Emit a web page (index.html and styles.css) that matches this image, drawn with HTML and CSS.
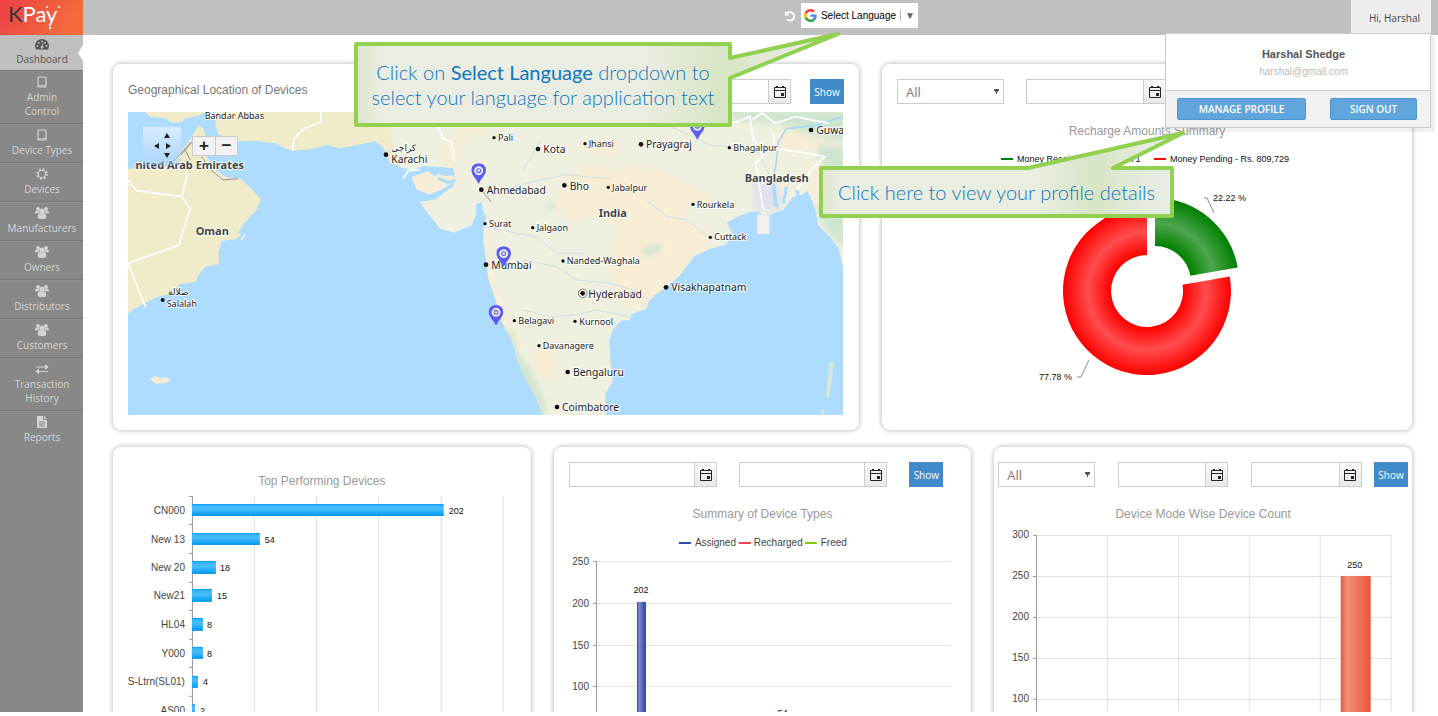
FILE: index.html
```
<!DOCTYPE html>
<html lang="en">
<head>
<meta charset="utf-8">
<title>KPay Dashboard</title>
<link rel="stylesheet" href="styles.css">
</head>
<body>
<svg class="defs" width="0" height="0" aria-hidden="true">
  <defs>
    <symbol id="i-gauge" viewBox="0 0 14 12"><path fill="currentColor" fill-rule="evenodd" d="M7 1a7 7 0 0 0-6 10.5h12A7 7 0 0 0 7 1zM2.5 7.1a.9.9 0 1 1 0 1.8.9.9 0 0 1 0-1.8zM3.9 4a.9.9 0 1 1 0 1.8.9.9 0 0 1 0-1.8zM7 2.5a.9.9 0 1 1 0 1.8.9.9 0 0 1 0-1.8zM10.1 4a.9.9 0 1 1 0 1.8.9.9 0 0 1 0-1.8zM11.5 7.1a.9.9 0 1 1 0 1.8.9.9 0 0 1 0-1.8zM7.8 5l.7.2-.7 2.7A1.4 1.4 0 1 1 7 7.7z"/></symbol>
    <symbol id="i-tablet" viewBox="0 0 14 12"><rect x="3" y="1" width="8" height="10" rx="1" fill="none" stroke="currentColor" stroke-width="1.2"/><path stroke="currentColor" d="M3 9.8h8"/></symbol>
    <symbol id="i-sun" viewBox="0 0 14 12"><circle cx="7" cy="6" r="3.7" fill="none" stroke="currentColor" stroke-width="1.1"/><circle cx="7" cy="6" r="5" fill="none" stroke="currentColor" stroke-width="1.6" stroke-dasharray="1.9 2.03"/></symbol>
    <symbol id="i-users" viewBox="0 0 14 12"><g fill="currentColor"><circle cx="7" cy="4.2" r="2.6"/><circle cx="3" cy="2" r="1.9"/><circle cx="11" cy="2" r="1.9"/><path d="M2.800 10V9c0-1.700.7-2.600 2.200-2.700a3.400 3.400 0 0 0 4 0c1.500.1 2.200 1 2.200 2.700v1c0 1.200-.8 2-2 2H4.800c-1.200 0-2-.8-2-2zM.3 6V5c0-.8.5-1.300 1.200-1.300.7.5 1.500.6 2.300.3 0 1 .3 1.600.8 2.200H1.500C.6 6.800.3 6.800.3 6zM13.700 6V5c0-.8-.5-1.300-1.200-1.300-.7.5-1.500.6-2.300.3 0 1-.3 1.600-.8 2.200h3.100c.9.6 1.200.6 1.200-.2z"/></g></symbol>
    <symbol id="i-swap" viewBox="0 0 14 12"><path fill="none" stroke="currentColor" stroke-width="1.200" d="M1 4h10M3 8.500h10"/><path fill="currentColor" d="M10 1l3.500 3L10 7zM4 5.500L.5 8.500 4 11.500z"/></symbol>
    <symbol id="i-file" viewBox="0 0 14 12"><path fill="currentColor" fill-rule="evenodd" d="M2 0h6v4h4v8H2zM9 0l3 3H9zM4 5.500v1h6v-1zM4 7.500v1h6v-1zM4 9.500v1h6v-1z"/></symbol>
    <symbol id="i-cal" viewBox="0 0 12 12"><path fill="none" stroke="#222" d="M.5 1.500h11v10H.5zM1 4.500h10"/><path fill="#222" d="M2 0h2v2H2zM8 0h2v2H8zM7 7h3v3H7z"/></symbol>
    <symbol id="i-pin" viewBox="0 0 44 62"><path fill="#5c5cf5" d="M22 0C9 0 0 9 0 21c0 14 14 24 22 41 8-17 22-27 22-41C44 9 35 0 22 0z"/><circle cx="22" cy="22" r="10.500" fill="#5c5cf5" stroke="#eeeedf" stroke-width="6"/><circle cx="22" cy="22" r="4" fill="#eeeedf"/></symbol>
    <radialGradient id="g-red" gradientUnits="userSpaceOnUse" cx="265" cy="151" r="84"><stop offset=".43" stop-color="#f00"/><stop offset=".7" stop-color="#ff4d4d"/><stop offset="1" stop-color="#f00"/></radialGradient>
    <radialGradient id="g-green" gradientUnits="userSpaceOnUse" cx="273" cy="142" r="84"><stop offset=".43" stop-color="#008000"/><stop offset=".7" stop-color="#4da64d"/><stop offset="1" stop-color="#008000"/></radialGradient>
    <linearGradient id="g-sky" x2="0" y2="1"><stop offset="0" stop-color="#0a9cf0"/><stop offset=".15" stop-color="#35b5f8"/><stop offset=".4" stop-color="#4dbdfa"/><stop offset=".85" stop-color="#0fa3f3"/><stop offset="1" stop-color="#0a90de"/></linearGradient>
    <linearGradient id="g-navy"><stop offset="0" stop-color="#3648ac"/><stop offset=".25" stop-color="#7c8acb"/><stop offset=".6" stop-color="#5566bb"/><stop offset="1" stop-color="#2c3ea6"/></linearGradient>
    <linearGradient id="g-coral"><stop offset="0" stop-color="#e5583a"/><stop offset=".22" stop-color="#f1937b"/><stop offset=".5" stop-color="#ee7b60"/><stop offset="1" stop-color="#e9583a"/></linearGradient>
    <linearGradient id="g-note"><stop offset="0" stop-color="#dde6cb"/><stop offset=".05" stop-color="#e9ede2"/><stop offset=".6" stop-color="#e9ede2"/><stop offset=".76" stop-color="#d8e5c4"/><stop offset=".9" stop-color="#e6ebdf"/><stop offset="1" stop-color="#ebeee6"/></linearGradient>
    <linearGradient id="g-logo" x2="1" y2=".3"><stop offset="0" stop-color="#eb4045"/><stop offset="1" stop-color="#f56c3c"/></linearGradient>
    <filter id="soft"><feGaussianBlur stdDeviation="9"/></filter>
    <path id="india" d="M830 36l20 100 20 66 34 8 36-12 90 6 6 32-6 22-22 16-30 24-48 8 10 16 50 64 40 12 56-22 12-34v-30l16-6 6 30 9 14-8 24-1 50 9 64 7 50 20 58 20 70 32 62 20 70 30 60 22 40 18 47h190l-2-64 22-36-6-54-4-70 10-32 26-28h26l4-18 44-16 8-24 22-20 28-20 42-36 46-60 46-20 50-14 17-32-17-34 30-16 36-14 28-4 16 18 30-12 30-8 26-38 24-6 22-14 16 32 10 34 6 36 36 36 26 34 15 66V36z"/>
    <clipPath id="on-land"><use href="#india"/></clipPath>
  </defs>
</svg>

<div class="app">
  <aside class="sidebar">
    <a class="logo" href="#" aria-label="KPay">
      <svg viewBox="0 0 82 35" width="82" height="35">
        <rect width="82" height="35" fill="url(#g-logo)"/>
        <text class="logo-text" x="8" y="22"><tspan fill="#3b3335">K</tspan><tspan fill="#fff">Pay</tspan></text>
        <g fill="#fff"><circle cx="47" cy="7" r="1"/><circle cx="59" cy="7" r="1"/><circle cx="50" cy="28" r="1.200"/></g>
      </svg>
    </a>
    <nav>
      <ul class="menu">
        <li><a class="item active" href="#"><svg><use href="#i-gauge"/></svg>Dashboard</a></li>
        <li><a class="item" href="#"><svg><use href="#i-tablet"/></svg>Admin<br>Control</a></li>
        <li><a class="item" href="#"><svg><use href="#i-tablet"/></svg>Device Types</a></li>
        <li><a class="item" href="#"><svg><use href="#i-sun"/></svg>Devices</a></li>
        <li><a class="item" href="#"><svg><use href="#i-users"/></svg>Manufacturers</a></li>
        <li><a class="item" href="#"><svg><use href="#i-users"/></svg>Owners</a></li>
        <li><a class="item" href="#"><svg><use href="#i-users"/></svg>Distributors</a></li>
        <li><a class="item" href="#"><svg><use href="#i-users"/></svg>Customers</a></li>
        <li><a class="item" href="#"><svg><use href="#i-swap"/></svg>Transaction<br>History</a></li>
        <li><a class="item last" href="#"><svg><use href="#i-file"/></svg>Reports</a></li>
      </ul>
    </nav>
  </aside>

  <div class="page">
    <header class="topbar">
      <div class="language">
        <button class="undo" aria-label="Restore language"><svg viewBox="0 0 12 12" width="12" height="12"><path fill="none" stroke="#fff" stroke-width="1.800" d="M2.500 4A4.200 4.200 0 1 1 3 9.300"/><path fill="#fff" d="M1 1v4.500h4.500z"/></svg></button>
        <button class="translate">
          <svg viewBox="0 0 48 48" width="13" height="13"><path fill="#ea4335" d="M24 9.500c3.500 0 6.700 1.200 9.200 3.600l6.900-6.900C35.900 2.400 30.500 0 24 0 14.600 0 6.500 5.400 2.600 13.200l8 6.200C12.400 13.700 17.700 9.500 24 9.500z"/><path fill="#4285f4" d="M47 24.600c0-1.600-.2-3.100-.4-4.600H24v9h12.900c-.6 3-2.200 5.500-4.700 7.200l7.700 6C44.400 38 47 31.800 47 24.600z"/><path fill="#fbbc05" d="M10.500 28.600a14.500 14.500 0 0 1 0-9.200l-8-6.200a24 24 0 0 0 0 21.600z"/><path fill="#34a853" d="M24 48c6.500 0 11.900-2.100 15.900-5.800l-7.700-6c-2.200 1.500-4.900 2.300-8.200 2.300-6.300 0-11.600-4.200-13.500-9.900l-8 6.200C6.500 42.600 14.600 48 24 48z"/></svg>
          <span>Select Language</span><span class="caret">▼</span>
        </button>
      </div>
      <button class="user">Hi, Harshal</button>
    </header>

    <main class="board">
      <div class="row wide">
        <section class="card">
          <div class="filters geo">
            <h2 class="heading">Geographical Location of Devices</h2>
            <div class="date"><input type="text" aria-label="Map date"><button aria-label="Pick date"><svg><use href="#i-cal"/></svg></button></div>
            <button class="show">Show</button>
          </div>
          <div class="map">
            <svg viewBox="54 36 2145 909" role="img" aria-label="Map of device locations">
              <rect x="54" y="36" width="2145" height="909" fill="#aedcff"/>
              <g fill="#f0ebc9">
                <path d="M105 36l15 14 45 4 20 14 32-2 8-12 40-6 22-12z"/>
                <path d="M318 36l-2 40 10 26 48 22 60-2 60 8 50 22 58-4 48-13 40 10 70-14 34-7 16 10 14 16 16 40 40 10h60l60-60 60-108z"/>
                <path d="M54 206l110-6 25-12 26-38 22-28 28-45 14 6 8 26 2 60 30 44 30 18 43 5 34 32 27 30-14 32-38 42-20 30 12-6-4 12-12 10-42 4-10 34 2 36-40 8-20 22-10 24-50 6-18 26-55 16-58 30-28 20-6 28-6-4z"/>
              </g>
              <path fill="#f4ecd4" d="M120 838l15-10 20 6 15-2 12 8-14 8-30 4z"/>
              <path fill="#f0ebc9" d="M408 402l-12 22-4-6 8-12z"/>
              <use href="#india" fill="#f0f0e0"/>
              <path fill="#f8edd8" d="M905 230l50-16 50 14 26-2 6 16-40 26-40 16-38-16z"/>
              <g clip-path="url(#on-land)"><g filter="url(#soft)">
                <g fill="#f8edd5">
                  <path d="M970 36h180l-30 60-70 18-20-40-60-10z"/>
                  <path d="M1030 100l34 30-20 70-30 6-20-60zM1360 236l60-40 90 14 60-14 90 20 60 30 100 40-20 30-60-10-20 60 60 10 20 60-50 40-70 110-60 40-70-10-60-110 30-120-60-50-80 30-40-40zM1120 450l20 40 26 100 22 60 34 40 20 50-12 6-50-80-60-100zM1400 130l80-10 60 30-60 20z"/>
                  <path d="M1995 110l60-30 110 20 20 50-120-6-60 20zM2080 190l80 20 39 110-30 60-60-100z"/>
                  <path d="M1260 760l60-20 30 60-30 40-40-20z"/>
                </g>
                <g fill="#d0e5d0">
                  <path d="M1840 30h370v96l-100-16-100-36-130-10zM2130 130l80 10v90l-60-10-30-60zM2120 330l40-70 50 110v70l-50-30z"/>
                  <path d="M1190 685l20 10 10 60 40 50 40 90 10 60h-40l-36-86-34-60z"/>
                  <path d="M1310 310l20-6 6 20-20 10zM1590 450l60-20 10 20-50 20z"/>
                </g>
                <path fill="#dfe2ec" d="M1930 240h70l20 90h-90z"/>
              </g></g>
              <path fill="#d8e8d4" d="M2158 790l12-6-4 60-10 50-8-6zM2138 925l6 10-4 10h-6z"/>
              <rect x="1942" y="345" width="36" height="57" fill="#f2efec"/>
              <g fill="none" stroke="#a9d8f5" stroke-width="5">
                <path d="M2199 50l-80 26-90 10-24 40-6 60-10 50 14 90"/>
                <path stroke-width="3" opacity=".5" d="M1990 250l-20-40-20-50-90-20-60-4-50-26-90-40-80 10-120-40M1240 210l30-50 20-40M1115 305l60-40 40-4 50-16 100-20 140 10M1120 380l30 4 70 16 60 10 60 50 80 0M1620 600l-50-30-70-20-100-10-60-40-100-20M1850 430l-70-30-50-40-60-10-60-50M1560 650l-100-20-60 14-80 6-80-20"/>
              </g>
              <g fill="none" stroke="#abdcfb" stroke-width="9"><path d="M985 235l30 12 20-6M960 215l20 10M2060 270l10 40M2030 260l-10 50M1990 260l6 60"/></g>
              <g fill="none" stroke="#fff" stroke-width="5">
                <path d="M632 36v30l-50 20-30 30-4 36M54 240l26 32 136 18 16-70M216 290l24 36-34 110-152 54 52 130M985 80l14 36 26 10 8 60M880 236l14-24 36-4M1780 70l60 10 80-30 8 60 30 60-20 20 20 130 8 10M1926 60l30-20 40 30 60-20 100 20M1990 100l4 46 100 14 50 10-40 40-44 60"/>
              </g>
              <g fill="none" stroke="#94939c" stroke-width="3"><path d="M188 186l56-60M210 168l40-46M225 150l16 30M275 170l28 40 36 30 46-4M1114 270l30 36"/></g>
              <g fill="#111">
                <circle cx="828" cy="164" r="7"/><circle cx="158" cy="600" r="6"/><circle cx="1114" cy="269" r="7"/><circle cx="1152" cy="113" r="5"/><circle cx="1284" cy="147" r="7"/><circle cx="1425" cy="131" r="5"/><circle cx="1593" cy="133" r="7"/><circle cx="1858" cy="143" r="5"/><circle cx="2103" cy="90" r="7"/><circle cx="1363" cy="256" r="7"/><circle cx="1495" cy="262" r="5"/><circle cx="1749" cy="313" r="5"/><circle cx="1125" cy="371" r="5"/><circle cx="1268" cy="383" r="5"/><circle cx="1801" cy="412" r="5"/><circle cx="1128" cy="494" r="7"/><circle cx="1359" cy="483" r="5"/><circle cx="1418" cy="580" r="7"/><circle cx="1418" cy="580" r="13" fill="none" stroke="#555" stroke-width="2"/><circle cx="1668" cy="562" r="7"/><circle cx="1213" cy="662" r="5"/><circle cx="1395" cy="664" r="5"/><circle cx="1287" cy="737" r="5"/><circle cx="1373" cy="816" r="7"/><circle cx="1341" cy="921" r="7"/>
              </g>
              <g class="town">
                <text x="284" y="57">Bandar Abbas</text><text x="170" y="622">Salalah</text><text x="174" y="586">صلالة</text><text x="844" y="152">كراچی</text>
                <text x="1164" y="124">Pali</text><text x="1436" y="141">Jhansi</text><text x="1870" y="154">Bhagalpur</text><text x="1506" y="272">Jabalpur</text><text x="1760" y="324">Rourkela</text><text x="1137" y="381">Surat</text><text x="1280" y="393">Jalgaon</text><text x="1813" y="421">Cuttack</text><text x="1370" y="493">Nanded-Waghala</text><text x="1225" y="673">Belagavi</text><text x="1408" y="674">Kurnool</text><text x="1298" y="747">Davanagere</text>
              </g>
              <g class="city">
                <text x="844" y="190">Karachi</text><text x="1300" y="158">Kota</text><text x="1608" y="145">Prayagraj</text><text x="2119" y="101">Guwa</text><text x="1130" y="281">Ahmedabad</text><text x="1379" y="269">Bho</text><text x="1144" y="507">Mumbai</text><text x="1435" y="593">Hyderabad</text><text x="1684" y="573">Visakhapatnam</text><text x="1389" y="828">Bengaluru</text><text x="1356" y="932">Coimbatore</text>
              </g>
              <g class="country"><text x="402" y="208" text-anchor="end">nited Arab Emirates</text><text x="257" y="405">Oman</text><text x="1466" y="352">India</text><text x="1904" y="247">Bangladesh</text></g>
              <use href="#i-pin" x="1084" y="190" width="44" height="62"/><use href="#i-pin" x="1159" y="439" width="44" height="62"/><use href="#i-pin" x="1136" y="615" width="44" height="62"/><use href="#i-pin" x="1740" y="57" width="44" height="62"/>
            </svg>
            <button class="pan" aria-label="Pan map"><svg viewBox="0 0 38 38"><path fill="#222" d="M24 6l3 5h-6zM24 31l3-5h-6zM11 19l5-3v6zM28 19l-5-3v6z"/></svg></button>
            <div class="zoom"><button aria-label="Zoom in">+</button><button aria-label="Zoom out">−</button></div>
          </div>
        </section>

        <section class="card">
          <div class="filters">
            <select class="short" aria-label="Recharge device"><option>All</option></select>
            <div class="date"><input type="text" aria-label="Recharge from"><button aria-label="Pick date"><svg><use href="#i-cal"/></svg></button></div>
            <div class="date"><input type="text" aria-label="Recharge to"><button aria-label="Pick date"><svg><use href="#i-cal"/></svg></button></div>
            <button class="show">Show</button>
          </div>
          <h2 class="title pie-title">Recharge Amounts Summary</h2>
          <svg class="chart" viewBox="0 0 530 248" role="img" aria-label="Recharge amounts">
            <path stroke="green" stroke-width="2" d="M119 19h12"/><path stroke="red" stroke-width="2" d="M272 19h12"/>
            <g class="legend-small"><text x="135" y="22">Money Received - Rs. 231,271</text><text x="288" y="22">Money Pending - Rs. 809,729</text></g>
            <path fill="url(#g-red)" d="M347.700 136.400A84 84 0 1 1 265 67v48a36 36 0 1 0 35.500 29.700z"/>
            <path fill="url(#g-green)" d="M273 58a84 84 0 0 1 82.700 69.400l-47.300 8.300A36 36 0 0 0 273 106z"/>
            <path fill="none" stroke="#8c8c8c" d="M322 58h3l7 15M195 237h4l8-17"/>
            <text class="val" x="331" y="61">22.22 %</text><text class="val" x="157" y="240">77.78 %</text>
          </svg>
        </section>
      </div>

      <div class="row thirds">
        <section class="card">
          <h2 class="title top-title">Top Performing Devices</h2>
          <svg class="chart" viewBox="0 0 418 275" role="img" aria-label="Top performing devices">
            <path stroke="#dfdfdf" d="M141.500 6v269M203.500 6v269M265.500 6v269M328.500 6v269M390.500 6v269"/>
            <path stroke="#999" d="M79.500 6v269M76 6.500h3M76 34.500h3M76 63.500h3M76 92.500h3M76 120.500h3M76 149.500h3M76 177.500h3M76 206.500h3M76 235.500h3"/>
            <g fill="url(#g-sky)"><rect x="79" y="14" width="252" height="12"/><rect x="79" y="43" width="68" height="12"/><rect x="79" y="71" width="24" height="13"/><rect x="79" y="99" width="20" height="13"/><rect x="79" y="128" width="11" height="13"/><rect x="79" y="157" width="11" height="12"/><rect x="79" y="186" width="6" height="12"/><rect x="79" y="214" width="3" height="12"/></g>
            <g text-anchor="end"><text x="72" y="24">CN000</text><text x="72" y="53">New 13</text><text x="72" y="81">New 20</text><text x="72" y="109">New21</text><text x="72" y="138">HL04</text><text x="72" y="167">Y000</text><text x="72" y="195">S-Ltrn(SL01)</text><text x="72" y="224">AS00</text></g>
            <g class="val"><text x="336" y="24">202</text><text x="152" y="53">54</text><text x="107" y="81">18</text><text x="104" y="109">15</text><text x="94" y="138">8</text><text x="94" y="167">8</text><text x="90" y="195">4</text><text x="87" y="224">2</text></g>
          </svg>
        </section>

        <section class="card">
          <div class="filters">
            <div class="date"><input type="text" aria-label="Types from"><button aria-label="Pick date"><svg><use href="#i-cal"/></svg></button></div>
            <div class="date"><input type="text" aria-label="Types to"><button aria-label="Pick date"><svg><use href="#i-cal"/></svg></button></div>
            <button class="show">Show</button>
          </div>
          <h2 class="title">Summary of Device Types</h2>
          <svg class="chart" viewBox="0 0 418 245" role="img" aria-label="Summary of device types">
            <path stroke="#3648ac" stroke-width="2" d="M125 20h12"/><path stroke="#f0454e" stroke-width="2" d="M185 20h12"/><path stroke="#8cc800" stroke-width="2" d="M251 20h12"/>
            <text x="141" y="23">Assigned</text><text x="200" y="23">Recharged</text><text x="267" y="23">Freed</text>
            <path stroke="#e2e2e2" d="M43 38.500h354M43 80.500h354M43 122.500h354M43 163.500h354M43 205.500h354"/>
            <path stroke="#999" d="M42.500 38v207M39 38.500h4M39 80.500h4M39 122.500h4M39 163.500h4"/>
            <g text-anchor="end"><text x="35" y="42">250</text><text x="35" y="84">200</text><text x="35" y="126">150</text><text x="35" y="167">100</text></g>
            <rect x="83" y="79" width="9" height="166" fill="url(#g-navy)"/>
            <g class="val" text-anchor="middle"><text x="87" y="70">202</text><text x="229" y="193">54</text></g>
          </svg>
        </section>

        <section class="card">
          <div class="filters tight">
            <select aria-label="Mode device"><option>All</option></select>
            <div class="date"><input type="text" aria-label="Mode from"><button aria-label="Pick date"><svg><use href="#i-cal"/></svg></button></div>
            <div class="date"><input type="text" aria-label="Mode to"><button aria-label="Pick date"><svg><use href="#i-cal"/></svg></button></div>
            <button class="show">Show</button>
          </div>
          <h2 class="title">Device Mode Wise Device Count</h2>
          <svg class="chart" viewBox="0 0 418 245" role="img" aria-label="Device count by mode">
            <path stroke="#e2e2e2" d="M43 12.500h355M43 53.500h355M43 94.500h355M43 135.500h355M43 176.500h355M43 217.500h355M113.500 12v233M184.500 12v233M255.500 12v233M326.500 12v233M397.500 12v233"/>
            <path stroke="#999" d="M42.500 12v233M39 12.500h4M39 53.500h4M39 94.500h4M39 135.500h4M39 176.500h4"/>
            <g text-anchor="end"><text x="35" y="15">300</text><text x="35" y="56">250</text><text x="35" y="97">200</text><text x="35" y="138">150</text><text x="35" y="179">100</text></g>
            <rect x="347" y="53" width="30" height="192" fill="url(#g-coral)"/>
            <text class="val" x="361" y="45" text-anchor="middle">250</text>
          </svg>
        </section>
      </div>
    </main>
  </div>

  <div class="profile" role="dialog" aria-label="Profile">
    <div class="who"><strong>Harshal Shedge</strong><span>harshal@gmail.com</span></div>
    <div class="actions"><button>MANAGE PROFILE</button><button>SIGN OUT</button></div>
  </div>

  <div class="note note-language">
    <svg viewBox="0 0 488 96" width="488" height="96"><path fill="url(#g-note)" stroke="#92d050" stroke-width="4" stroke-linejoin="round" d="M2 12h374v14L484 2 376 46v47H2z"/></svg>
    <p>Click on <b>Select Language</b> dropdown to<br>select your language for application text</p>
  </div>
  <div class="note note-profile">
    <svg viewBox="0 0 368 88" width="368" height="88"><path fill="url(#g-note)" stroke="#92d050" stroke-width="4" stroke-linejoin="round" d="M2 37h207L364 2 294 37h59v48H2z"/></svg>
    <p>Click here to view your profile details</p>
  </div>
</div>
</body>
</html>
```
FILE: styles.css
```
* { box-sizing: border-box; }
body { margin: 0; background: #fff; font-family: "Liberation Sans", Arial, sans-serif; font-size: 11px; color: #666; overflow: hidden; }
button, input, select { font: inherit; color: inherit; margin: 0; padding: 0; border: 0; border-radius: 0; }
h2, p, ul { margin: 0; padding: 0; font-weight: 400; list-style: none; }
svg { display: block; }
.defs { position: absolute; }

.app { position: relative; display: flex; height: calc(100vh - 4px); overflow: hidden; }

.sidebar { flex: 0 0 83px; background: #888; }
.logo { display: block; height: 35px; background: #f56c3c; }
.logo-text { font: 22px "Lato", sans-serif; }
.item { position: relative; display: block; padding: 5px 0 5px 1px; border-bottom: 1px solid #757575; box-shadow: inset 0 1px #8f8f8f; font: 10px/14px "Open Sans", sans-serif; color: #d4d4d4; text-align: center; text-decoration: none; }
.item svg { width: 14px; height: 12px; margin: 0 auto 2px; }
.active { padding: 3px 0 4px 1px; background: #c0c0c0; color: #555; box-shadow: none; }
.active::after { content: ""; position: absolute; right: 0; top: 10px; border: solid transparent; border-width: 8px 5px 8px 0; border-right-color: #fff; }
.last { border-bottom: 0; }

.page { flex: 1; min-width: 0; }
.topbar { display: flex; height: 35px; padding-right: 7px; background: #c0c0c0; }
.language { display: flex; align-items: center; gap: 5px; margin: 0 auto 4px 52%; }
.undo { background: none; }
.translate { display: flex; align-items: center; gap: 4px; height: 25px; padding: 0 3px; background: #fff; color: #000; font-size: 10px; }
.caret { border-left: 1px solid #bbb; padding-left: 4px; color: #666; }
.user { width: 80px; padding: 0 11px 0 0; background: #eee; font: 10px "Open Sans", sans-serif; text-align: right; color: #444; }

.board { display: grid; gap: 17px; padding: 29px 26px 0 30px; }
.row { display: grid; column-gap: 23px; }
.wide { grid-template-columns: 746fr 530fr; }
.thirds { grid-template-columns: repeat(3, 1fr); }
.card { min-width: 0; border-radius: 8px; box-shadow: 0 0 4px 1px #c4c4c4; }
.wide .card { padding-bottom: 15px; }

.filters { display: flex; gap: 22px; padding: 15px 28px 0 15px; }
.geo { gap: 19px; padding-right: 15px; }
.heading { flex: 1; font-size: 12px; line-height: 23px; color: #777; }
.geo .date { flex: 0 0 148px; }
.filters select { flex: 91; min-width: 0; height: 25px; padding-left: 8px; appearance: none; border: 1px solid #ccc; background: #fff conic-gradient(from -30deg at 50% 100%, #555 60deg, transparent 0) no-repeat right 4px center / 5px 5px; font: 13px "Open Sans", sans-serif; color: #777; }
.filters .short { flex: 0 0 107px; }
.date { flex: 114; display: flex; min-width: 0; height: 25px; border: 1px solid #ccc; }
.date input { flex: 1; min-width: 0; width: 0; background: #fff; }
.date button { flex: 0 0 22px; display: grid; place-items: center; border-left: 1px solid #ccc; background: linear-gradient(#fafafa, #e9e9e9); }
.date svg { width: 12px; height: 12px; }
.show { flex: 0 0 34px; height: 25px; background: #428bca; color: #fff; font: 10px "Open Sans", sans-serif; }
.tight { gap: 23px; padding: 15px 4px 0; }
.tight .show { margin-left: -11px; }

.title { padding: 19px 0 1px; line-height: 16px; font-size: 12px; color: #999; text-align: center; }
.pie-title { padding-top: 19px; }
.top-title { padding-top: 26px; }
.chart { width: 100%; font-size: 10px; fill: #444; }
.val, .legend-small { font-size: 9px; fill: #111; }

.map { position: relative; margin: 8px 16px 0 15px; }
.map > svg { width: 100%; }
.town, .city, .country { font-family: "Noto Sans", "DejaVu Sans", sans-serif; fill: #222; stroke: #fff; stroke-width: 6px; stroke-opacity: .8; paint-order: stroke; stroke-linejoin: round; }
.town { font-size: 27px; }
.city { font-size: 31px; }
.country { font-size: 33px; font-weight: 700; fill: #444; }
.pan { position: absolute; left: 15px; top: 15px; width: 38px; height: 38px; background: linear-gradient(#d8ebff, rgba(160, 205, 250, .4)); }
.zoom { position: absolute; left: 64px; top: 24px; display: flex; border: 1px solid #ccc; }
.zoom button { width: 22px; height: 18px; background: #f2f2f2; color: #222; font-size: 17px; font-weight: 700; line-height: 18px; }
.zoom button + button { border-left: 1px solid #ccc; }

.profile { position: absolute; right: 7px; top: 33px; width: 266px; border: 1px solid #ccc; background: #f2f2f2; box-shadow: 4px 4px rgba(0, 0, 0, .06); }
.who { display: grid; gap: 4px; justify-items: center; padding: 13px 0 11px 11px; background: #fff; border-bottom: 1px solid #ccc; line-height: 14px; }
.who strong { font-size: 11px; color: #555; }
.who span { font-size: 10px; color: #bbb; }
.actions { display: flex; gap: 24px; padding: 7px 13px 7px 11px; }
.actions button { flex: 130; height: 22px; border: 1px solid #4e96d2; border-radius: 2px; background: #60a5dc; color: #fff; font: 600 10px "Open Sans", sans-serif; }
.actions button + button { flex: 87; }

.note { position: absolute; font: 300 20px/25px "Lato", sans-serif; color: #0f75bd; text-align: center; }
.note p { position: absolute; left: 0; font-weight: 300; }
.note-language { left: 354px; top: 32px; }
.note-language p { top: 28px; width: 378px; }
.note-profile { left: 819px; top: 131px; }
.note-profile p { top: 49px; width: 355px; }
```
